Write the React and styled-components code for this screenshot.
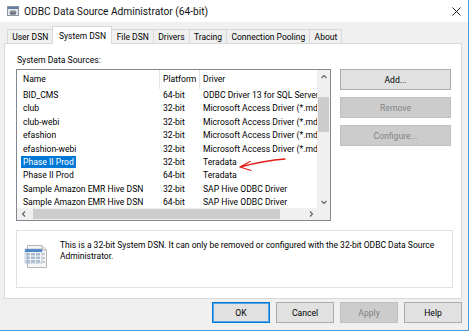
import React from 'react';
import styled, { createGlobalStyle } from 'styled-components';

const GlobalStyle = createGlobalStyle`
  html, body {
    margin: 0;
    padding: 0;
    background: #ffffff;
  }
  body {
    font-family: Roboto, "Liberation Sans", Arial, sans-serif;
    font-size: 8.6px;
    color: #000000;
  }
  * {
    box-sizing: border-box;
  }
`;

const Window = styled('div')`
  position: relative;
  width: 469px;
  height: 331px;
  border-right: 1px solid #4b9bdc;
  border-bottom: 1px solid #4b9bdc;
  display: flex;
  flex-direction: column;
`;

const TitleBar = styled('div')`
  height: 22px;
  flex: none;
  background: #ffffff;
  display: flex;
  align-items: center;
  padding-left: 7px;
`;

const Title = styled('div')`
  flex: 1;
  margin-left: 5px;
  font-size: 10.2px;
  color: #111;
`;

const CloseIcon = styled('svg')`
  width: 9px;
  height: 9px;
  margin-right: 7px;
`;

const Body = styled('div')`
  flex: 1;
  background: #f0f0f0;
  display: flex;
  flex-direction: column;
  padding: 4px 6px 0 4px;
`;

const TabStrip = styled('div')`
  display: flex;
  align-items: flex-end;
  height: 18px;
  padding-left: 4px;
  margin-bottom: -1px;
  position: relative;
  z-index: 1;
`;

const Tab = styled('div')`
  height: ${(p) => (p.$active ? 18 : 15)}px;
  margin-left: -1px;
  padding: 0 ${(p) => (p.$active ? 5.5 : 4.2)}px;
  border: 1px solid #d9d9d9;
  border-bottom: ${(p) => (p.$active ? 'none' : '1px solid #d9d9d9')};
  background: ${(p) => (p.$active ? '#ffffff' : '#f0f0f0')};
  display: flex;
  align-items: center;
  white-space: nowrap;
  font-size: 8.5px;
`;

const Panel = styled('div')`
  height: 256px;
  flex: none;
  background: #ffffff;
  border: 1px solid #d9d9d9;
  padding: 10px 9px 0 11px;
`;

const Label = styled('div')`
  height: 12px;
  line-height: 12px;
  margin-bottom: 3px;
  padding-left: 1px;
`;

const TopRow = styled('div')`
  display: flex;
  align-items: flex-start;
  gap: 9px;
`;

const ListBox = styled('div')`
  width: 315px;
  height: 152px;
  border: 1px solid #828790;
  background: #ffffff;
  display: grid;
  grid-template-columns: 1fr 13px;
  grid-template-rows: 1fr 12px;
  overflow: hidden;
`;

const ListContent = styled('div')`
  overflow: hidden;
  white-space: nowrap;
`;

const HeaderRow = styled('div')`
  display: flex;
  height: 19px;
`;

const HeaderCell = styled('div')`
  flex: none;
  width: ${(p) => p.$w}px;
  padding-left: ${(p) => p.$pad}px;
  line-height: 19px;
  border-right: ${(p) => (p.$last ? 'none' : '1px solid #e5e5e5')};
`;

const ItemRow = styled('div')`
  display: flex;
  height: 13.4px;
  line-height: 13.4px;
`;

const Cell = styled('div')`
  flex: none;
  width: ${(p) => p.$w}px;
  padding-left: ${(p) => p.$pad}px;
  overflow: hidden;
`;

const NameText = styled('span')`
  display: inline-block;
  padding: 0 2px;
  line-height: 12px;
  background: ${(p) => (p.$selected ? '#0078d7' : 'transparent')};
  color: ${(p) => (p.$selected ? '#ffffff' : '#000000')};
`;

const VScroll = styled('div')`
  background: #f0f0f0;
  display: flex;
  flex-direction: column;
`;

const HScroll = styled('div')`
  background: #f0f0f0;
  display: flex;
  align-items: stretch;
`;

const ArrowBox = styled('div')`
  flex: none;
  width: 13px;
  height: ${(p) => (p.$horizontal ? 12 : 13)}px;
  display: flex;
  align-items: center;
  justify-content: center;
  margin-left: ${(p) => (p.$push ? 'auto' : 0)};
  margin-top: ${(p) => (p.$pushDown ? 'auto' : 0)};
`;

const VThumb = styled('div')`
  margin: 14px 1px 0;
  height: 35px;
  background: #cdcdcd;
`;

const HThumb = styled('div')`
  margin: 1px 0 1px 3px;
  width: 247px;
  background: #cdcdcd;
`;

const Corner = styled('div')`
  background: #f0f0f0;
`;

const SideButtons = styled('div')`
  width: 111px;
  display: flex;
  flex-direction: column;
  gap: 7px;
`;

const Button = styled('div')`
  height: 21px;
  width: ${(p) => (p.$w ? `${p.$w}px` : 'auto')};
  display: flex;
  align-items: center;
  justify-content: center;
  background: ${(p) => (p.$disabled ? '#cccccc' : '#e1e1e1')};
  border: 1px solid
    ${(p) => (p.$default ? '#0078d7' : p.$disabled ? '#bfbfbf' : '#adadad')};
  box-shadow: ${(p) => (p.$default ? 'inset 0 0 0 1px #5aa6e4' : 'none')};
  color: ${(p) => (p.$disabled ? '#838383' : '#000000')};
`;

const InfoBox = styled('div')`
  margin-top: 9px;
  width: 437px;
  height: 58px;
  border: 1px solid #e1e1e1;
  background: #ffffff;
  display: flex;
  align-items: flex-start;
  padding: 9px 0 0 7px;
`;

const InfoIcon = styled('svg')`
  flex: none;
  width: 25px;
  height: 26px;
  margin-top: 3px;
`;

const InfoText = styled('div')`
  margin-left: 11px;
  line-height: 10.5px;
  font-size: 8.5px;
`;

const Footer = styled('div')`
  flex: 1;
  display: flex;
  justify-content: flex-end;
  align-items: flex-start;
  gap: 6px;
  padding-top: 3px;
`;

const Annotation = styled('svg')`
  position: absolute;
  left: 0;
  top: 0;
  width: 469px;
  height: 331px;
  pointer-events: none;
`;

const sources = [
  ['BID_CMS', '64-bit', 'ODBC Driver 13 for SQL Server'],
  ['club', '32-bit', 'Microsoft Access Driver (*.mdb, *.accdb)'],
  ['club-webi', '32-bit', 'Microsoft Access Driver (*.mdb, *.accdb)'],
  ['efashion', '32-bit', 'Microsoft Access Driver (*.mdb, *.accdb)'],
  ['efashion-webi', '32-bit', 'Microsoft Access Driver (*.mdb, *.accdb)'],
  ['Phase II Prod', '32-bit', 'Teradata', true],
  ['Phase II Prod', '64-bit', 'Teradata'],
  ['Sample Amazon EMR Hive DSN', '32-bit', 'SAP Hive ODBC Driver'],
  ['Sample Amazon EMR Hive DSN', '64-bit', 'SAP Hive ODBC Driver'],
];

const tabs = ['User DSN', 'System DSN', 'File DSN', 'Drivers', 'Tracing', 'Connection Pooling', 'About'];

const Chevron = ({ dir }) => {
  const paths = {
    up: 'M1.5 5 L4 2.5 L6.5 5',
    down: 'M1.5 3 L4 5.5 L6.5 3',
    left: 'M5 1.5 L2.5 4 L5 6.5',
    right: 'M3 1.5 L5.5 4 L3 6.5',
  };
  return (
    <svg width="8" height="8" viewBox="0 0 8 8">
      <path d={paths[dir]} fill="none" stroke="#606060" strokeWidth="1.1" />
    </svg>
  );
};

const AppIcon = () => (
  <svg width="12" height="12" viewBox="0 0 12 12">
    <rect x="0.5" y="1.5" width="11" height="9" fill="#e4e8ec" stroke="#8c96a0" />
    <rect x="1" y="2" width="10" height="2" fill="#5d7fa3" />
    <ellipse cx="6" cy="6.5" rx="3.2" ry="1.2" fill="#9aa3ab" />
    <rect x="2.8" y="6.5" width="6.4" height="2.2" fill="#7d868f" />
    <ellipse cx="6" cy="8.7" rx="3.2" ry="1.1" fill="#6b747c" />
  </svg>
);

const DocIcon = () => (
  <InfoIcon viewBox="0 0 25 26">
    <path d="M3.5 2.5 H18 L22.5 7 V24.5 H3.5 Z" fill="#f7f7f7" stroke="#b5b5b5" />
    <path d="M18 2.5 V7 H22.5" fill="#e6e6e6" stroke="#b5b5b5" />
    <rect x="1" y="6" width="17" height="3" fill="#4b86c8" />
    <g fill="#a9bbd2">
      <rect x="2" y="10" width="4" height="2.5" />
      <rect x="7" y="10" width="4" height="2.5" />
      <rect x="12" y="10" width="4" height="2.5" />
      <rect x="2" y="13.5" width="4" height="2.5" />
      <rect x="7" y="13.5" width="4" height="2.5" />
      <rect x="12" y="13.5" width="4" height="2.5" />
      <rect x="2" y="17" width="4" height="2.5" />
      <rect x="7" y="17" width="4" height="2.5" />
      <rect x="12" y="17" width="4" height="2.5" />
    </g>
    <g fill="#c6c6c6">
      <rect x="18.5" y="10" width="2.5" height="2" />
      <rect x="18.5" y="14" width="2.5" height="2" />
      <rect x="18.5" y="18" width="2.5" height="2" />
    </g>
    <rect x="1" y="6" width="17" height="14" fill="none" stroke="#8fa6c2" strokeWidth="0.6" />
  </InfoIcon>
);

const cols = [
  { w: 143, pad: 6 },
  { w: 40, pad: 3 },
  { w: 200, pad: 3 },
];

export default function App() {
  return (
    <>
      <GlobalStyle />
      <Window>
        <TitleBar>
          <AppIcon />
          <Title>ODBC Data Source Administrator (64-bit)</Title>
          <CloseIcon viewBox="0 0 9 9">
            <path d="M0.5 0.5 L8.5 8.5 M8.5 0.5 L0.5 8.5" stroke="#222" strokeWidth="1" />
          </CloseIcon>
        </TitleBar>
        <Body>
          <TabStrip>
            {tabs.map((t) => (
              <Tab key={t} $active={t === 'System DSN'}>
                {t}
              </Tab>
            ))}
          </TabStrip>
          <Panel>
            <Label>System Data Sources:</Label>
            <TopRow>
              <ListBox>
                <ListContent>
                  <HeaderRow>
                    <HeaderCell $w={cols[0].w} $pad={cols[0].pad}>Name</HeaderCell>
                    <HeaderCell $w={cols[1].w} $pad={cols[1].pad}>Platform</HeaderCell>
                    <HeaderCell $w={cols[2].w} $pad={cols[2].pad} $last>Driver</HeaderCell>
                  </HeaderRow>
                  {sources.map(([name, platform, driver, selected], i) => (
                    <ItemRow key={i}>
                      <Cell $w={cols[0].w} $pad={4}>
                        <NameText $selected={selected}>{name}</NameText>
                      </Cell>
                      <Cell $w={cols[1].w} $pad={cols[1].pad}>{platform}</Cell>
                      <Cell $w={cols[2].w} $pad={cols[2].pad}>{driver}</Cell>
                    </ItemRow>
                  ))}
                </ListContent>
                <VScroll>
                  <ArrowBox><Chevron dir="up" /></ArrowBox>
                  <VThumb />
                  <ArrowBox $pushDown><Chevron dir="down" /></ArrowBox>
                </VScroll>
                <HScroll>
                  <ArrowBox $horizontal><Chevron dir="left" /></ArrowBox>
                  <HThumb />
                  <ArrowBox $horizontal $push><Chevron dir="right" /></ArrowBox>
                </HScroll>
                <Corner />
              </ListBox>
              <SideButtons>
                <Button>Add...</Button>
                <Button $disabled>Remove</Button>
                <Button $disabled>Configure...</Button>
              </SideButtons>
            </TopRow>
            <InfoBox>
              <DocIcon />
              <InfoText>
                This is a 32-bit System DSN. It can only be removed or configured with the 32-bit ODBC Data Source
                <br />
                Administrator.
              </InfoText>
            </InfoBox>
          </Panel>
          <Footer>
            <Button $w={58} $default>OK</Button>
            <Button $w={58}>Cancel</Button>
            <Button $w={58} $disabled>Apply</Button>
            <Button $w={58}>Help</Button>
          </Footer>
        </Body>
        <Annotation viewBox="0 0 469 331">
          <path
            d="M285 159 C 270 160, 255 163, 240 167 M240 167 L250 161.5 M240 167 L251 170.5"
            fill="none"
            stroke="#e0201b"
            strokeWidth="1.3"
            strokeLinecap="round"
          />
        </Annotation>
      </Window>
    </>
  );
}
